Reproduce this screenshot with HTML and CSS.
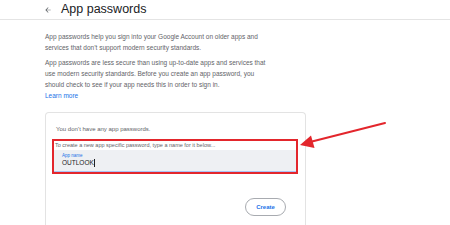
FILE: index.html
```html
<!DOCTYPE html>
<html lang="en">
<head>
<meta charset="utf-8">
<title>App passwords</title>
<link rel="stylesheet" href="styles.css">
</head>
<body>
<header class="topbar">
  <svg class="back" viewBox="0 0 24 24" width="8" height="8" aria-hidden="true"><path d="M20 11H7.83l5.59-5.59L12 4l-8 8 8 8 1.41-1.41L7.83 13H20v-2z" fill="#5f6368"/></svg>
  <h1 class="title">App passwords</h1>
</header>
<main class="content">
  <p class="desc">App passwords help you sign into your Google Account on older apps and<br>services that don’t support modern security standards.</p>
  <p class="desc">App passwords are less secure than using up-to-date apps and services that<br>use modern security standards. Before you create an app password, you<br>should check to see if your app needs this in order to sign in.<br><a class="link" href="#">Learn more</a></p>
  <section class="card">
    <p class="empty">You don’t have any app passwords.</p>
    <div class="highlight">
      <p class="hint">To create a new app specific password, type a name for it below...</p>
      <div class="field">
        <span class="label">App name</span>
        <span class="value">OUTLOOK<span class="caret"></span></span>
      </div>
    </div>
    <div class="actions"><button class="btn">Create</button></div>
  </section>
</main>
<svg class="annot" viewBox="0 0 450 225" width="450" height="225" aria-hidden="true">
  <line x1="385" y1="123" x2="310" y2="142" stroke="#e3262c" stroke-width="2" stroke-linecap="round"/>
  <polygon points="300,145 311,135.5 314.5,148" fill="#e3262c"/>
</svg>
</body>
</html>
```
FILE: styles.css
```css
html, body {
  margin: 0;
  padding: 0;
}
body {
  width: 450px;
  height: 225px;
  overflow: hidden;
  background: #ffffff;
  font-family: "Liberation Sans", Arial, sans-serif;
  color: #5f6368;
  position: relative;
}
.topbar {
  height: 19px;
  display: flex;
  align-items: center;
  gap: 9px;
  padding-left: 44px;
  border-bottom: 1px solid #e4e4e4;
}
.back {
  flex: none;
}
.title {
  margin: 0;
  font-size: 12.5px;
  font-weight: 400;
  color: #202124;
  line-height: 19px;
}
.content {
  padding: 12px 0 0 45px;
}
.desc {
  margin: 0 0 5px;
  font-size: 6.5px;
  line-height: 10.7px;
  color: #5f6368;
  white-space: nowrap;
}
.link {
  color: #1a73e8;
  text-decoration: none;
}
.card {
  margin-top: 11px;
  width: 261px;
  height: 113px;
  box-sizing: border-box;
  border: 1px solid #e3e3e3;
  border-bottom: none;
  border-radius: 4px 4px 0 0;
  padding: 11px 7px 0 6px;
}
.empty {
  margin: 0 0 4px 4px;
  font-size: 6px;
  line-height: 11px;
  color: #5f6368;
}
.highlight {
  border: 2px solid #e3262c;
  width: 246px;
  box-sizing: border-box;
}
.hint {
  margin: 0 0 1px 1px;
  font-size: 5.5px;
  line-height: 8px;
  color: #5f6368;
  white-space: nowrap;
}
.field {
  display: flex;
  flex-direction: column;
  background: #eef0f3;
  border-bottom: 1px solid #a9c4f5;
  padding: 3px 8px 3px 8px;
  height: 15px;
}
.label {
  font-size: 4.5px;
  line-height: 5px;
  color: #1a73e8;
}
.value {
  font-size: 6.5px;
  line-height: 10px;
  color: #202124;
  display: flex;
  align-items: center;
}
.caret {
  display: inline-block;
  width: 1px;
  height: 8px;
  background: #202124;
  margin-left: 0.5px;
}
.actions {
  display: flex;
  justify-content: flex-end;
  margin-top: 24px;
  padding-right: 12px;
}
.btn {
  width: 41px;
  height: 18px;
  border: 1px solid #a8abb0;
  border-radius: 9px;
  background: #ffffff;
  color: #1a73e8;
  font-family: "Liberation Sans", Arial, sans-serif;
  font-size: 6px;
  font-weight: 700;
  padding: 0;
}
.annot {
  position: absolute;
  top: 0;
  left: 0;
  pointer-events: none;
}
```
